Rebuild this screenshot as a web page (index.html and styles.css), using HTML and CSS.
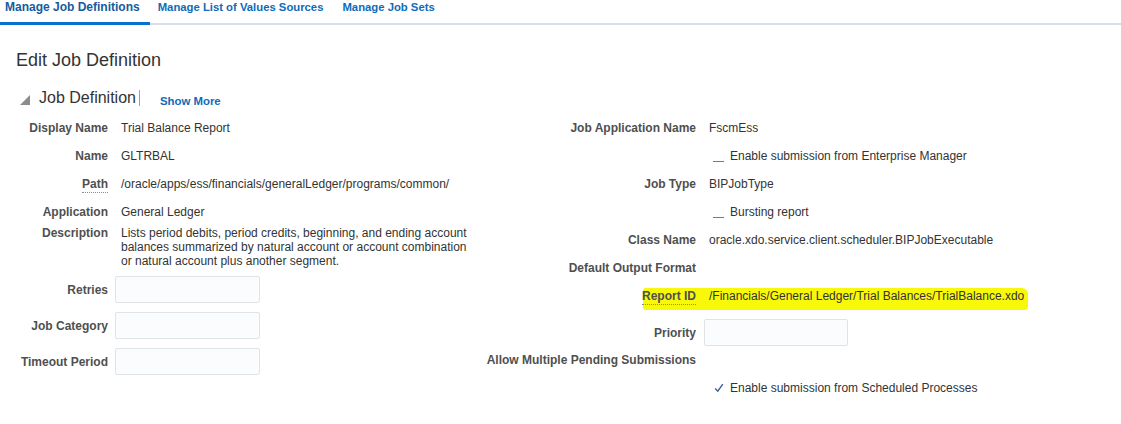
FILE: index.html
```html
<!DOCTYPE html>
<html lang="en">
<head>
<meta charset="utf-8">
<title>Edit Job Definition</title>
<link rel="stylesheet" href="styles.css">
</head>
<body>
<nav class="tabs">
  <a class="tab tab-first active">Manage Job Definitions</a>
  <a class="tab tab-second">Manage List of Values Sources</a>
  <a class="tab tab-third">Manage Job Sets</a>
</nav>

<h1 class="page-title">Edit Job Definition</h1>

<div class="section-head">
  <span class="disclosure"></span>
  <span class="section-title">Job Definition</span>
  <span class="caret"></span>
  <a class="show-more">Show More</a>
</div>

<div class="form">
  <div class="col col-left">
    <div class="row"><span class="label">Display Name</span><span class="value">Trial Balance Report</span></div>
    <div class="row"><span class="label">Name</span><span class="value">GLTRBAL</span></div>
    <div class="row"><span class="label"><span class="dotted">Path</span></span><span class="value">/oracle/apps/ess/financials/generalLedger/programs/common/</span></div>
    <div class="row"><span class="label">Application</span><span class="value">General Ledger</span></div>
    <div class="row row-desc"><span class="label">Description</span><span class="value desc">Lists period debits, period credits, beginning, and ending account balances summarized by natural account or account combination or natural account plus another segment.</span></div>
    <div class="row row-input"><span class="label">Retries</span><span class="field"><span class="input"></span></span></div>
    <div class="row row-input"><span class="label">Job Category</span><span class="field"><span class="input"></span></span></div>
    <div class="row row-input"><span class="label">Timeout Period</span><span class="field"><span class="input"></span></span></div>
  </div>

  <div class="col col-right">
    <div class="row"><span class="label">Job Application Name</span><span class="value">FscmEss</span></div>
    <div class="row"><span class="label"></span><span class="value"><span class="check-off"></span>Enable submission from Enterprise Manager</span></div>
    <div class="row"><span class="label">Job Type</span><span class="value">BIPJobType</span></div>
    <div class="row"><span class="label"></span><span class="value"><span class="check-off"></span>Bursting report</span></div>
    <div class="row"><span class="label">Class Name</span><span class="value">oracle.xdo.service.client.scheduler.BIPJobExecutable</span></div>
    <div class="row"><span class="label">Default Output Format</span><span class="value"></span></div>
    <div class="row row-report">
      <span class="highlight"></span>
      <span class="label"><span class="dotted">Report ID</span></span><span class="value">/Financials/General Ledger/Trial Balances/TrialBalance.xdo</span>
    </div>
    <div class="row row-input"><span class="label">Priority</span><span class="field"><span class="input"></span></span></div>
    <div class="row"><span class="label">Allow Multiple Pending Submissions</span><span class="value"></span></div>
    <div class="row"><span class="label"></span><span class="value"><svg class="check-on" viewBox="0 0 10 10" width="10" height="10"><path d="M1.2 5.4 L3.8 8.2 L8.8 1.2" fill="none" stroke="#3d5c9a" stroke-width="1.4"/></svg>Enable submission from Scheduled Processes</span></div>
  </div>
</div>
</body>
</html>
```

FILE: styles.css
```css
* { box-sizing: border-box; }

body {
  margin: 0;
  font-family: "Liberation Sans", Arial, sans-serif;
  font-size: 12px;
  color: #333;
  background: #fff;
}

.tabs {
  display: flex;
  height: 25px;
  border-bottom: 2px solid #d6dfe6;
}

.tab {
  display: block;
  font-weight: bold;
  font-size: 11.3px;
  line-height: 14px;
  color: #0f6bb8;
  height: 25px;
  white-space: nowrap;
}

.tab-first { padding-left: 5px; padding-right: 10px; color: #145c9e; font-size: 12px; }
.tab-second { padding-left: 8px; padding-right: 10px; }
.tab-third { padding-left: 9px; }

.tab.active {
  border-bottom: 3px solid #0572ce;
  margin-bottom: -2px;
}

.page-title {
  margin: 24px 0 0 16px;
  font-size: 18px;
  font-weight: normal;
  line-height: 22px;
  color: #333;
}

.section-head {
  display: flex;
  align-items: center;
  height: 24px;
  margin-top: 15px;
  padding-left: 20px;
}

.disclosure {
  width: 0;
  height: 0;
  border-left: 10px solid transparent;
  border-bottom: 10px solid #8c8c8c;
  margin-top: 3px;
}

.section-title {
  font-size: 16px;
  color: #333;
  margin-left: 9px;
  line-height: 18px;
}

.caret {
  width: 1px;
  height: 16px;
  background: #a0a0a0;
  margin-left: 3px;
}

.show-more {
  font-size: 11.4px;
  font-weight: bold;
  color: #0f6bb8;
  margin-left: 20px;
  margin-top: 6px;
}

.form {
  display: flex;
  margin-top: 4px;
}

.col { display: flex; flex-direction: column; }
.col-left { width: 470px; }
.col-right { flex: 1; }

.row {
  display: flex;
  align-items: center;
  height: 28px;
}

.label {
  flex: none;
  text-align: right;
  font-weight: bold;
  color: #4f4f4f;
  white-space: nowrap;
}

.col-left .label { width: 108px; }
.col-right .label { width: 226px; }

.value {
  margin-left: 7px;
  padding-left: 6px;
  color: #333;
  white-space: nowrap;
}

.dotted {
  border-bottom: 1px dotted #8a8a8a;
  padding-bottom: 1px;
}

.row-desc {
  align-items: flex-start;
  height: 41px;
  line-height: 14px;
}

.row-desc .label { line-height: 14px; }

.desc {
  white-space: normal;
  width: 355px;
}

.row-input {
  height: 36px;
  padding-top: 9px;
}

.field { margin-left: 7px; }

.input {
  display: block;
  width: 145px;
  height: 27px;
  border: 1px solid #dfe4e7;
  border-radius: 2px;
  background: #fbfcfd;
}

.col-right .input { width: 144px; margin-left: 1px; }

.check-off {
  display: inline-block;
  width: 11px;
  height: 1px;
  background: #7a7a7a;
  margin: 0 6px 0 4px;
  vertical-align: -2px;
}

.check-on {
  margin: 0 6px 0 5px;
  vertical-align: -1px;
}

.row-report { position: relative; }

.highlight {
  position: absolute;
  left: 173px;
  top: 6px;
  width: 385px;
  height: 22px;
  background: #f8f80a;
  border-radius: 3px 6px 4px 3px;
  z-index: -1;
}

.row-report .label, .row-report .value { position: relative; }
.row-report .value { padding-left: 13px; margin-left: 0; }
```
